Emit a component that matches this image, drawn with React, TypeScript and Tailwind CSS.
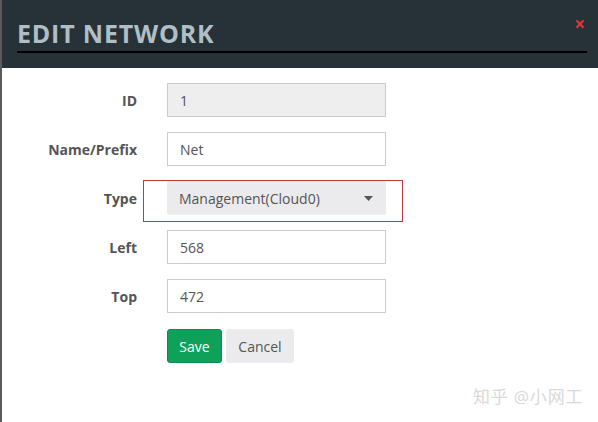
import React from "react";

const font = { fontFamily: '"Open Sans", "Noto Sans", "Noto Sans CJK SC", sans-serif' };

function Row({ label, children }: { label: string; children: React.ReactNode }) {
  return (
    <div className="flex items-center h-[34px]">
      <label className="w-[135px] text-right text-[14px] font-bold text-[#555]">{label}</label>
      <div className="ml-[30px] w-[219px] h-full">{children}</div>
    </div>
  );
}

export default function App() {
  return (
    <div className="relative w-[598px] h-[422px] bg-white flex overflow-hidden" style={font}>
      <div className="w-[2px] bg-[#5a5a5a] shrink-0" />
      <div className="flex-1 flex flex-col">
        {/* header */}
        <div className="relative h-[68px] bg-[#263238] pl-[15px] pr-[11px] pt-[16px]">
          <h1 className="text-[25px] leading-[34px] font-bold text-[#b0bec5] tracking-[0.8px]">EDIT NETWORK</h1>
          <div className="h-[2px] bg-black mt-[1px]" />
          <span className="absolute right-[13px] top-[15px] text-[19px] leading-none font-bold text-[#d9383a]">×</span>
        </div>

        {/* form */}
        <div className="flex flex-col gap-[15px] pt-[15px] text-[14px]">
          <Row label="ID">
            <div className="h-full bg-[#eeeeee] border border-[#ccc] px-[12px] flex items-center text-[#555]">1</div>
          </Row>
          <Row label="Name/Prefix">
            <div className="h-full bg-white border border-[#ccc] px-[12px] flex items-center text-[#555]">Net</div>
          </Row>
          <Row label="Type">
            <div className="h-full bg-[#ebebed] rounded-[3px] px-[12px] flex items-center justify-between text-[#555]">
              <span>Management(Cloud0)</span>
              <svg width="9" height="5" viewBox="0 0 9 5" className="mr-[1px]">
                <path d="M0 0 L9 0 L4.5 5 Z" fill="#555" />
              </svg>
            </div>
          </Row>
          <Row label="Left">
            <div className="h-full bg-white border border-[#ccc] px-[12px] flex items-center text-[#555]">568</div>
          </Row>
          <Row label="Top">
            <div className="h-full bg-white border border-[#ccc] px-[12px] flex items-center text-[#555]">472</div>
          </Row>
          <div className="flex gap-[4px] ml-[165px] mt-[1px]">
            <button className="w-[55px] h-[34px] bg-[#0fa15a] border border-[#0d8a4d] rounded-[3px] text-white text-[14px]">Save</button>
            <button className="w-[68px] h-[34px] bg-[#ebebed] rounded-[3px] text-[#555] text-[14px]">Cancel</button>
          </div>
        </div>
      </div>

      {/* annotation box */}
      <div className="absolute left-[143px] top-[180px] w-[260px] h-[42px] border border-[#c0393b] pointer-events-none" />

      {/* watermark */}
      <span className="absolute left-[473px] top-[384px] text-[17px] text-[#d9d9d9] tracking-[0.8px]">知乎 @小网工</span>
    </div>
  );
}
